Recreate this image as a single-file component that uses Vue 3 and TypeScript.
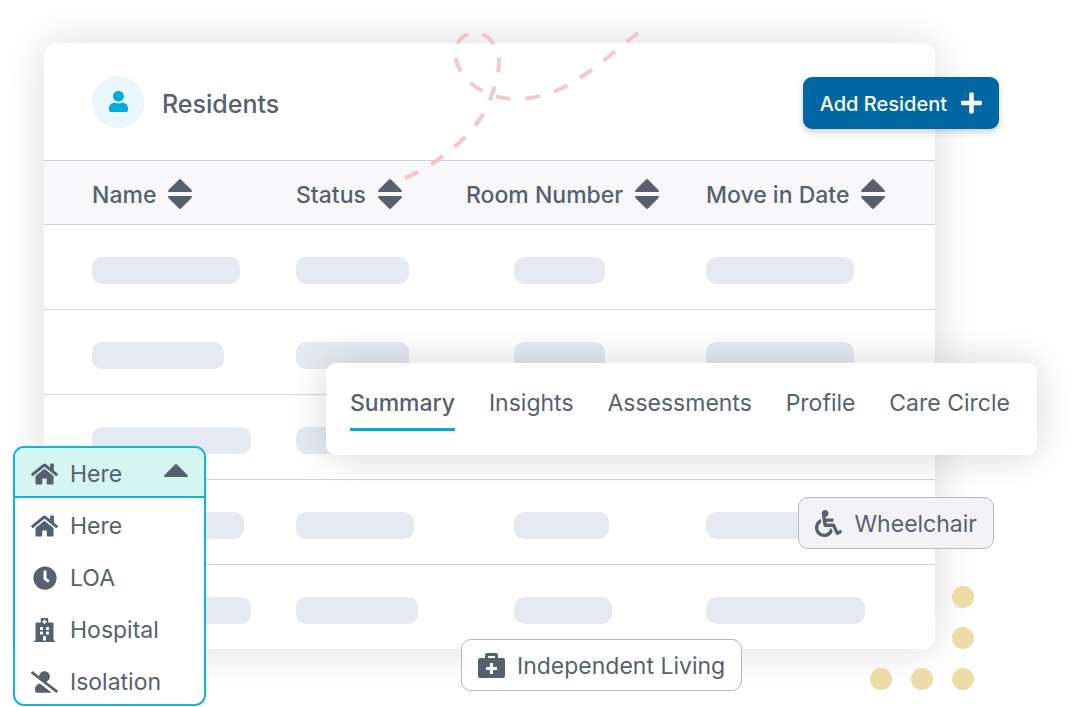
<script setup lang="ts">
import { ref } from 'vue'

interface Icon {
  box: string
  width: number
  height: number
  path: string
}

const icons: Record<string, Icon> = {
  home: {
    box: '0 0 576 512', width: 27, height: 24,
    path: 'M280.37 148.26L96 300.11V464a16 16 0 0 0 16 16l112.06-.29a16 16 0 0 0 15.92-16V368a16 16 0 0 1 16-16h64a16 16 0 0 1 16 16v95.64a16 16 0 0 0 16 16.05L464 480a16 16 0 0 0 16-16V300L295.67 148.26a12.19 12.19 0 0 0-15.3 0zM571.6 251.47L488 182.56V44.05a12 12 0 0 0-12-12h-56a12 12 0 0 0-12 12v72.61L318.47 43a48 48 0 0 0-61 0L4.34 251.47a12 12 0 0 0-1.6 16.9l25.5 31A12 12 0 0 0 45.15 301l235.22-193.74a12.19 12.19 0 0 1 15.3 0L530.9 301a12 12 0 0 0 16.9-1.6l25.5-31a12 12 0 0 0-1.7-16.93z',
  },
  clock: {
    box: '0 0 512 512', width: 24, height: 24,
    path: 'M256,8C119,8,8,119,8,256S119,504,256,504,504,393,504,256,393,8,256,8Zm92.49,313h0l-20,25a16,16,0,0,1-22.49,2.5h0l-67-49.72a40,40,0,0,1-15-31.23V112a16,16,0,0,1,16-16h32a16,16,0,0,1,16,16V256l58,42.5A16,16,0,0,1,348.49,321Z',
  },
  hospital: {
    box: '0 0 448 512', width: 21, height: 24,
    path: 'M448 492v20H0v-20c0-6.627 5.373-12 12-12h20V120c0-13.255 10.745-24 24-24h88V24c0-13.255 10.745-24 24-24h112c13.255 0 24 10.745 24 24v72h88c13.255 0 24 10.745 24 24v360h20c6.627 0 12 5.373 12 12zM308 192h-40c-6.627 0-12 5.373-12 12v40c0 6.627 5.373 12 12 12h40c6.627 0 12-5.373 12-12v-40c0-6.627-5.373-12-12-12zm-168 64h40c6.627 0 12-5.373 12-12v-40c0-6.627-5.373-12-12-12h-40c-6.627 0-12 5.373-12 12v40c0 6.627 5.373 12 12 12zm104 128h-40c-6.627 0-12 5.373-12 12v84h64v-84c0-6.627-5.373-12-12-12zm64-96h-40c-6.627 0-12 5.373-12 12v40c0 6.627 5.373 12 12 12h40c6.627 0 12-5.373 12-12v-40c0-6.627-5.373-12-12-12zm-116 12c0-6.627-5.373-12-12-12h-40c-6.627 0-12 5.373-12 12v40c0 6.627 5.373 12 12 12h40c6.627 0 12-5.373 12-12v-40zM182 96h26v26a6 6 0 0 0 6 6h20a6 6 0 0 0 6-6V96h26a6 6 0 0 0 6-6V70a6 6 0 0 0-6-6h-26V38a6 6 0 0 0-6-6h-20a6 6 0 0 0-6 6v26h-26a6 6 0 0 0-6 6v20a6 6 0 0 0 6 6z',
  },
  isolation: {
    box: '0 0 640 512', width: 27, height: 22,
    path: 'M633.8 458.1L362.3 248.3C412.1 230.7 448 183.8 448 128 448 57.3 390.7 0 320 0c-67.1 0-121.5 51.8-126.9 117.4L45.5 3.4C38.5-2 28.5-.8 23 6.2L3.4 31.4c-5.4 7-4.2 17 2.8 22.4l588.4 454.7c7 5.4 17 4.2 22.5-2.8l19.6-25.3c5.4-6.8 4.1-16.9-2.9-22.3zM96 422.4V464c0 26.5 21.5 48 48 48h350.2L207.4 290.3C144.2 301.3 96 356 96 422.4z',
  },
}

const options = [
  { label: 'Here', icon: icons.home },
  { label: 'LOA', icon: icons.clock },
  { label: 'Hospital', icon: icons.hospital },
  { label: 'Isolation', icon: icons.isolation },
]
const status = ref(options[0])
const open = ref(true)

function choose(option: (typeof options)[number]) {
  status.value = option
  open.value = false
}

const tabs = ['Summary', 'Insights', 'Assessments', 'Profile', 'Care Circle']
const activeTab = ref('Summary')

const columns = ['Name', 'Status', 'Room Number', 'Move in Date']
const rows = [
  [148, 113, 91, 148],
  [132, 113, 91, 148],
  [159, 113, 91, 148],
  [152, 118, 95, 148],
  [159, 122, 98, 159],
]
</script>

<template>
  <main class="scene">
    <section class="card">
      <header class="card-head">
        <span class="avatar">
          <svg width="19" height="21" viewBox="0 0 448 512" preserveAspectRatio="none" aria-hidden="true">
            <path d="M224 256c70.7 0 128-57.3 128-128S294.7 0 224 0 96 57.3 96 128s57.3 128 128 128zm89.6 32h-16.7c-22.2 10.2-46.9 16-72.9 16s-50.6-5.8-72.9-16h-16.7C60.2 288 0 348.2 0 422.4V464c0 26.5 21.5 48 48 48h352c26.5 0 48-21.5 48-48v-41.6c0-74.2-60.2-134.4-134.4-134.4z" />
          </svg>
        </span>
        <h1>Residents</h1>
        <button type="button" class="add">
          <span class="label">Add Resident</span>
          <svg width="21" height="24" viewBox="0 0 448 512" aria-hidden="true">
            <path d="M416 208H272V64c0-17.67-14.33-32-32-32h-32c-17.67 0-32 14.33-32 32v144H32c-17.67 0-32 14.33-32 32v32c0 17.67 14.33 32 32 32h144v144c0 17.67 14.33 32 32 32h32c17.67 0 32-14.33 32-32V304h144c17.67 0 32-14.33 32-32v-32c0-17.67-14.33-32-32-32z" />
          </svg>
        </button>
      </header>

      <table>
        <colgroup>
          <col class="col-name" />
          <col class="col-status" />
          <col class="col-room" />
          <col />
        </colgroup>
        <thead>
          <tr>
            <th v-for="column in columns" :key="column" scope="col">
              <button type="button" class="sort">
                <span class="label">{{ column }}</span>
                <svg width="24" height="30" viewBox="0 0 24 30" aria-hidden="true">
                  <path d="M11 .5a1.5 1.5 0 0 1 2 0L23.500 11c.8.9.4 2-.8 2H1.300C.1 13-.3 11.900.5 11z" />
                  <path d="M11 29.500a1.500 1.500 0 0 0 2 0L23.500 19c.8-.9.4-2-.8-2H1.300C.1 17-.3 18.100.5 19z" />
                </svg>
              </button>
            </th>
          </tr>
        </thead>
        <tbody>
          <tr v-for="(row, r) in rows" :key="r">
            <td v-for="(width, c) in row" :key="c">
              <span class="pill" :style="{ width: width + 'px' }"></span>
            </td>
          </tr>
        </tbody>
      </table>
    </section>

    <svg class="trail" width="240" height="160" viewBox="400 25 240 160" aria-hidden="true">
      <path pathLength="31" d="M405 178C438 164 480 132 491 97C496 84 499 74 499 61C498 44 487 33 475 33C463 33 455 42 455 55C457 76 480 98 514 99C565 100 600 62 638 33" />
    </svg>

    <div class="dots" aria-hidden="true">
      <i v-for="n in 5" :key="n"></i>
    </div>

    <nav class="tabs" role="tablist" aria-label="Resident sections">
      <button
        v-for="tab in tabs"
        :key="tab"
        type="button"
        role="tab"
        :class="{ active: tab === activeTab }"
        :aria-selected="tab === activeTab"
        @click="activeTab = tab"
      >{{ tab }}</button>
    </nav>

    <div class="dropdown">
      <button type="button" class="trigger" aria-haspopup="listbox" :aria-expanded="open" @click="open = !open">
        <span class="icon">
          <svg :width="status.icon.width" :height="status.icon.height" :viewBox="status.icon.box" aria-hidden="true">
            <path :d="status.icon.path" />
          </svg>
        </span>
        {{ status.label }}
        <svg class="caret" width="24" height="13" viewBox="0 0 24 13" aria-hidden="true">
          <path d="M11 .5a1.500 1.500 0 0 1 2 0L23.500 11c.8.9.4 2-.8 2H1.300C.1 13-.3 11.900.5 11z" />
        </svg>
      </button>
      <ul v-if="open" role="listbox" aria-label="Status">
        <li v-for="option in options" :key="option.label" role="presentation">
          <button type="button" role="option" :aria-selected="option === status" @click="choose(option)">
            <span class="icon">
              <svg :width="option.icon.width" :height="option.icon.height" :viewBox="option.icon.box" aria-hidden="true">
                <path :d="option.icon.path" />
              </svg>
            </span>
            {{ option.label }}
          </button>
        </li>
      </ul>
    </div>

    <span class="chip wheelchair">
      <svg width="27" height="27" viewBox="0 0 512 512" aria-hidden="true">
        <path d="M496.101 385.669l14.227 28.663c3.929 7.915.697 17.516-7.218 21.445l-65.465 32.886c-16.049 7.967-35.556 1.194-43.189-15.055L331.679 320H192c-15.925 0-29.426-11.71-31.679-27.475C126.433 55.308 128.38 70.044 128 64c0-36.358 30.318-65.635 67.052-63.929 33.271 1.545 60.048 28.905 60.925 62.201.868 32.933-23.152 60.423-54.608 65.039l4.67 32.69H336c8.837 0 16 7.163 16 16v32c0 8.837-7.163 16-16 16H215.182l4.572 32H352a32 32 0 0 1 28.962 18.392L438.477 396.8l36.178-18.349c7.915-3.929 17.517-.697 21.446 7.218zM311.358 352h-24.506c-7.788 54.204-54.528 96-110.852 96-61.757 0-112-50.243-112-112 0-41.505 22.694-77.809 56.324-97.156-3.712-25.965-6.844-47.86-9.488-66.333C45.956 198.464 0 261.963 0 336c0 97.047 78.953 176 176 176 71.87 0 133.806-43.308 161.11-105.192L311.358 352z" />
      </svg>
      <span class="label">Wheelchair</span>
    </span>

    <span class="chip living">
      <svg width="27" height="25" viewBox="0 0 27 25" aria-hidden="true">
        <path fill-rule="evenodd" d="M7 5V2a2 2 0 0 1 2-2h9a2 2 0 0 1 2 2v3h5a2 2 0 0 1 2 2v16a2 2 0 0 1-2 2H2a2 2 0 0 1-2-2V7a2 2 0 0 1 2-2zM10 3v2h7V3zM12.500 10a.6.6 0 0 0-.6.6v3.300H8.600a.6.6 0 0 0-.6.6v2a.6.6 0 0 0 .6.6h3.300v3.300a.6.6 0 0 0 .6.6h2a.6.6 0 0 0 .6-.6v-3.300h3.300a.6.6 0 0 0 .6-.6v-2a.6.6 0 0 0-.6-.6h-3.300v-3.300a.6.6 0 0 0-.6-.6z" />
      </svg>
      <span class="label">Independent Living</span>
    </span>
  </main>
</template>

<style>
body {
  margin: 0;
  background: #fff;
}
</style>

<style scoped>
.scene {
  position: relative;
  box-sizing: border-box;
  min-height: 100vh;
  padding: 43px 145px 57px 44px;
  overflow: hidden;
  font-family: Inter, "Liberation Sans", sans-serif;
  font-size: 23px;
  line-height: 28px;
  color: #556171;
}

button {
  margin: 0;
  padding: 0;
  border: 0;
  background: none;
  font: inherit;
  color: inherit;
  text-align: left;
  cursor: pointer;
}

svg {
  flex: none;
  fill: currentColor;
}

.label {
  padding-top: 2px;
}

.card {
  border-radius: 12px;
  background: #fff;
  box-shadow: 0 0 45px rgba(0, 0, 0, 0.14);
}

.card-head {
  display: flex;
  align-items: center;
  height: 117px;
  padding-left: 48px;
}

.avatar {
  display: flex;
  align-items: center;
  justify-content: center;
  width: 52px;
  height: 52px;
  border-radius: 50%;
  background: #e9f8fd;
  color: #00aadd;
}

h1 {
  flex: 1;
  margin: 0 0 0 18px;
  padding-top: 4px;
  font-size: 25px;
  font-weight: 500;
  line-height: 32px;
}

.add {
  display: flex;
  align-items: center;
  gap: 14px;
  height: 52px;
  margin-top: 2px;
  margin-right: -64px;
  padding: 0 17px;
  border-radius: 9px;
  background: #0067a3;
  box-shadow: 0 3px 7px rgba(0, 0, 0, 0.2);
  font-size: 20px;
  font-weight: 500;
  color: #fff;
}

table {
  width: 100%;
  border-collapse: separate;
  border-spacing: 0;
  table-layout: fixed;
}

.col-name {
  width: 252px;
}

.col-status {
  width: 170px;
}

.col-room {
  width: 240px;
}

th {
  height: 61px;
  padding: 2px 0 0;
  border-top: 1px solid #c9d2e0;
  border-bottom: 1px solid #c9d2e0;
  background: #f8f8fb;
  font-weight: 500;
  white-space: nowrap;
}

th:first-child,
td:first-child {
  padding-left: 48px;
}

.sort {
  display: flex;
  align-items: center;
  gap: 12px;
}

td {
  height: 27px;
  padding: 32px 0 25px;
  border-bottom: 1px solid #cdd5e1;
  line-height: 0;
}

td:nth-child(3) {
  padding-left: 48px;
}

tr:last-child td {
  border-bottom: 0;
}

.pill {
  display: inline-block;
  height: 27px;
  border-radius: 10px;
  background: #e5eaf2;
}

.trail {
  position: absolute;
  top: 25px;
  left: 400px;
}

.trail path {
  fill: none;
  stroke: #efb9b8;
  stroke-width: 4;
  stroke-dasharray: 1 1;
  stroke-opacity: 0.78;
}

.dots {
  position: absolute;
  right: 106px;
  top: 586px;
  display: grid;
  grid-template-columns: repeat(3, 22px);
  gap: 19px;
}

.dots i {
  height: 22px;
  border-radius: 50%;
  background: #efdba7;
}

.dots i:nth-child(-n + 2) {
  grid-column: 3;
}

.tabs {
  position: absolute;
  top: 363px;
  left: 326px;
  right: 43px;
  box-sizing: border-box;
  display: flex;
  justify-content: space-between;
  padding: 26px 27px 24px 24px;
  border-radius: 10px;
  background: #fff;
  box-shadow: 0 0 40px rgba(0, 0, 0, 0.16);
}

.tabs button {
  height: 42px;
  padding-bottom: 11px;
  border-bottom: 3px solid transparent;
}

.tabs .active {
  border-bottom-color: #00aadd;
  font-weight: 500;
}

.dropdown {
  position: absolute;
  top: 446px;
  left: 13px;
  width: 193px;
  box-sizing: border-box;
  border: 2px solid #12b2de;
  border-radius: 11px;
  background: #fff;
  overflow: hidden;
}

.dropdown button {
  display: flex;
  align-items: center;
  width: 100%;
  height: 44px;
  padding: 0 16px;
}

.dropdown .trigger {
  height: 50px;
  padding-top: 3px;
  border-bottom: 2px solid #12b2de;
  background: #d5f5f0;
}

.icon {
  display: flex;
  justify-content: center;
  width: 27px;
  margin-right: 12px;
}

.caret {
  margin-left: auto;
  margin-bottom: 6px;
}

.dropdown ul {
  display: flex;
  flex-direction: column;
  gap: 8px;
  margin: 0;
  padding: 6px 0 0;
  list-style: none;
}

.chip {
  position: absolute;
  display: flex;
  align-items: center;
  gap: 12px;
  box-sizing: border-box;
  height: 52px;
  padding: 0 16px;
  border: 1px solid #b2b9c8;
  border-radius: 10px;
  background: #fff;
  white-space: nowrap;
}

.wheelchair {
  top: 497px;
  right: 86px;
  background: #f3f3f5;
}

.living {
  top: 639px;
  left: 461px;
}
</style>
